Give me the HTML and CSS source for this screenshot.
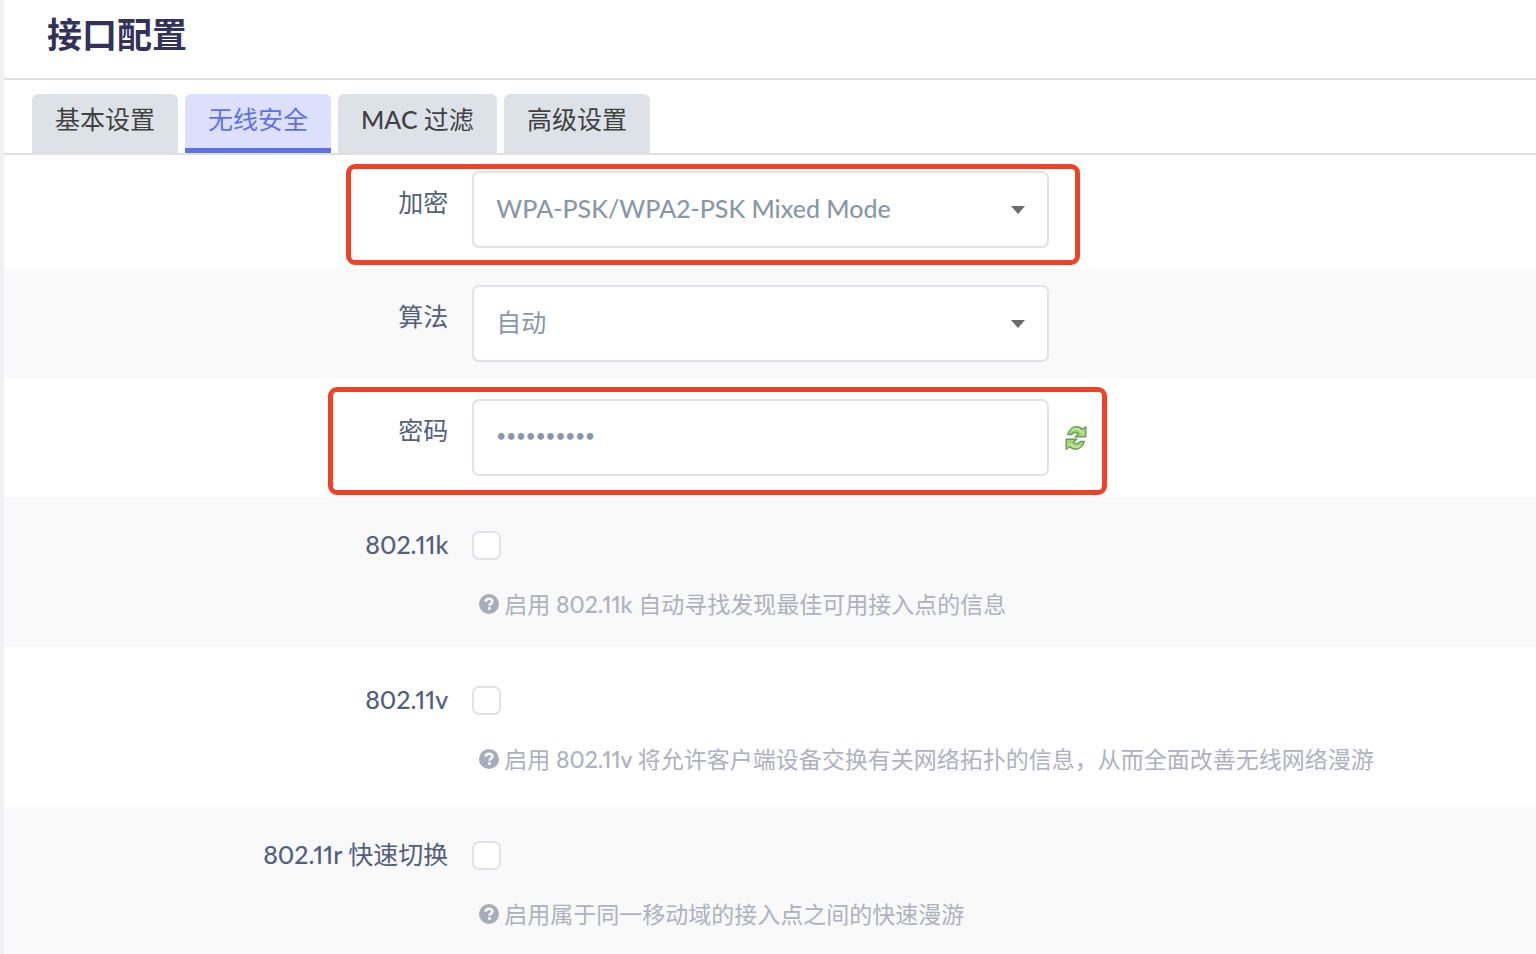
FILE: index.html
```html
<!DOCTYPE html>
<html lang="zh-CN">
<head>
<meta charset="utf-8">
<title>接口配置</title>
<link rel="stylesheet" href="styles.css">
</head>
<body>
<svg class="defs" width="0" height="0" aria-hidden="true">
  <symbol id="help" viewBox="0 0 20 20">
    <circle cx="10" cy="10" r="10" fill="currentColor"/>
    <path d="M6.6 7.6C6.8 5.7 8.2 4.8 10 4.8c2 0 3.4 1 3.4 2.7 0 1.9-2.9 2.1-2.9 4.2" fill="none" stroke="#fafafa" stroke-width="2.6"/>
    <rect x="9" y="13.2" width="2.9" height="2.6" fill="#fafafa"/>
  </symbol>
</svg>
<main class="page">
  <h1 class="title">接口配置</h1>
  <nav class="tabs">
    <a class="tab" href="#general">基本设置</a>
    <a class="tab active" href="#security">无线安全</a>
    <a class="tab" href="#mac">MAC 过滤</a>
    <a class="tab" href="#advanced">高级设置</a>
  </nav>
  <form class="form">
    <div class="row">
      <label class="label" for="encryption">加密</label>
      <div class="field">
        <div class="control">
          <select class="input" id="encryption"><option>WPA-PSK/WPA2-PSK Mixed Mode</option></select>
          <svg class="arrow" viewBox="0 0 14 8"><path d="M0 0h14L7 8z" fill="#6b6b6b"/></svg>
        </div>
        <span class="mark mark-select"></span>
      </div>
    </div>
    <div class="row shaded">
      <label class="label" for="cipher">算法</label>
      <div class="field">
        <div class="control">
          <select class="input" id="cipher"><option>自动</option></select>
          <svg class="arrow" viewBox="0 0 14 8"><path d="M0 0h14L7 8z" fill="#6b6b6b"/></svg>
        </div>
      </div>
    </div>
    <div class="row roomy">
      <label class="label" for="key">密码</label>
      <div class="field">
        <div class="control"><input class="input password" id="key" type="password" value="1234567890"></div>
        <button class="reveal" type="button" aria-label="显示/隐藏密码">
          <svg width="22" height="26" viewBox="0 0 22 26">
            <g id="half">
              <path d="M2.800 9.500C4 5 7.500 1.800 11.500 1.800c2.500 0 4 .7 5.500 2.200L20.800 2v9.800H10.500l3-3.300C10.500 6.800 8 7.500 6.500 9.500z" fill="#a3d67a" stroke="#6a9d58" stroke-width="1.400"/>
              <path d="M6.500 5.500c3-2.500 6-2.500 8.500 0l3.500 2.500" fill="none" stroke="#c4e8a0" stroke-width="1.500"/>
            </g>
            <use href="#half" transform="rotate(180 11 13)"/>
          </svg>
        </button>
        <span class="mark mark-key"></span>
      </div>
    </div>
    <div class="row shaded">
      <label class="label" for="k">802.11k</label>
      <div class="field check">
        <input class="box" id="k" type="checkbox">
        <p class="hint"><svg class="help"><use href="#help"/></svg>启用 802.11k 自动寻找发现最佳可用接入点的信息</p>
      </div>
    </div>
    <div class="row roomy">
      <label class="label" for="v">802.11v</label>
      <div class="field check">
        <input class="box" id="v" type="checkbox">
        <p class="hint"><svg class="help"><use href="#help"/></svg>启用 802.11v 将允许客户端设备交换有关网络拓扑的信息，从而全面改善无线网络漫游</p>
      </div>
    </div>
    <div class="row shaded last">
      <label class="label" for="r">802.11r 快速切换</label>
      <div class="field check">
        <input class="box" id="r" type="checkbox">
        <p class="hint"><svg class="help"><use href="#help"/></svg>启用属于同一移动域的接入点之间的快速漫游</p>
      </div>
    </div>
  </form>
</main>
</body>
</html>
```
FILE: styles.css
```css
* { box-sizing: border-box; }

body {
  margin: 0;
  background: #eff1f5;
  color: #525f7f;
  font-family: "Lato Medium", Lato, "Noto Sans CJK SC", sans-serif;
  font-size: 25px;
  font-variant-numeric: proportional-nums;
  line-height: 32px;
}

.defs { position: absolute; }

.page {
  display: flex;
  flex-direction: column;
  min-height: 100vh;
  margin-left: 4px;
  background: #fff;
}

.title {
  margin: 0;
  padding: 10px 43px 20px;
  border-bottom: 2px solid #dee0e2;
  color: #32325d;
  font-size: 35px;
  line-height: 48px;
  font-weight: 700;
}

.tabs {
  display: flex;
  gap: 7px;
  padding: 14px 28px 0;
  border-bottom: 2px solid #dee0e2;
}

.tab {
  padding: 9px 23px 13px;
  border-bottom: 5px solid #dde2e8;
  border-radius: 6px 6px 0 0;
  background: #dde2e8;
  color: #404040;
  text-decoration: none;
}

.tab.active {
  border-bottom-color: #5e72e4;
  background: #dde0fc;
  color: #5e72e4;
}

.form {
  display: flex;
  flex: 1;
  flex-direction: column;
}

.row {
  display: flex;
  gap: 24px;
  padding: 16px 0 21px;
}

.row.shaded {
  padding-bottom: 16px;
  background: #f9f9f9;
}

.row.roomy {
  padding-top: 21px;
}

.row.last { flex: 1; }

.label {
  flex: 0 0 29%;
  padding-top: 15px;
  text-align: right;
}

.field {
  display: flex;
  flex: 1;
  align-items: center;
  gap: 16px;
  position: relative;
}

.control {
  position: relative;
  width: 577px;
}

.input {
  display: block;
  width: 100%;
  height: 77px;
  padding: 0 22px 4px;
  border: 2px solid #dfe2e9;
  border-radius: 7px;
  background: #fff;
  color: #8898aa;
  font: inherit;
  appearance: none;
}

.input.password { font-size: 17px; }

.arrow {
  position: absolute;
  top: 35px;
  right: 24px;
  width: 14px;
  height: 8px;
  pointer-events: none;
}

.reveal {
  display: flex;
  padding: 0;
  border: 0;
  background: none;
}

.mark {
  position: absolute;
  border: 5px solid #ec4228;
  border-radius: 9px;
  pointer-events: none;
}

.mark-select {
  top: -7px;
  bottom: -17px;
  left: -126px;
  width: 734px;
}

.mark-key {
  top: -12px;
  bottom: -19px;
  left: -144px;
  width: 779px;
}

.field.check {
  flex-direction: column;
  align-items: flex-start;
  gap: 28px;
  padding: 18px 0 11px;
}

.box {
  width: 29px;
  height: 29px;
  margin: 0;
  border: 2px solid #dfe2e9;
  border-radius: 7px;
  background: #fff;
  appearance: none;
}

.hint {
  display: flex;
  align-items: center;
  gap: 5px;
  margin: 0;
  padding-left: 7px;
  color: #adb1c1;
  font-size: 23px;
  white-space: pre;
}

.help {
  width: 20px;
  height: 20px;
  color: #a7acbd;
}
```
